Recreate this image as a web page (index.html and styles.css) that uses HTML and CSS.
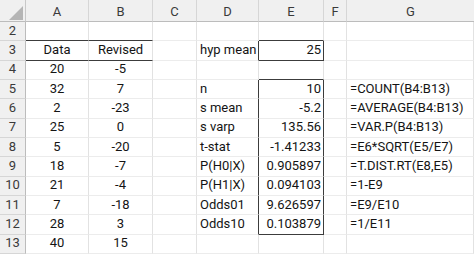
FILE: index.html
```html
<!DOCTYPE html>
<html>
<head>
<meta charset="utf-8">
<link rel="stylesheet" href="styles.css">
</head>
<body>
<div class="sheet">
  <div class="corner"><svg class="tri" width="14" height="14" viewBox="0 0 14 14"><polygon points="14,0 14,14 0,14" fill="#b5b5b5"/></svg></div>
  <div class="ch">A</div><div class="ch">B</div><div class="ch">C</div><div class="ch">D</div><div class="ch">E</div><div class="ch">F</div><div class="ch last">G</div>

  <div class="rh">2</div>
  <div class="c bb"></div><div class="c bb"></div><div class="c"></div><div class="c"></div><div class="c bb"></div><div class="c"></div><div class="c"></div>

  <div class="rh">3</div>
  <div class="c ctr bb">Data</div><div class="c ctr bb">Revised</div><div class="c"></div><div class="c lt br">hyp mean</div><div class="c rt br bb">25</div><div class="c"></div><div class="c"></div>

  <div class="rh">4</div>
  <div class="c ctr">20</div><div class="c ctr">-5</div><div class="c"></div><div class="c"></div><div class="c bb"></div><div class="c"></div><div class="c"></div>

  <div class="rh">5</div>
  <div class="c ctr">32</div><div class="c ctr">7</div><div class="c"></div><div class="c lt br">n</div><div class="c rt br">10</div><div class="c"></div><div class="c lt">=COUNT(B4:B13)</div>

  <div class="rh">6</div>
  <div class="c ctr">2</div><div class="c ctr">-23</div><div class="c"></div><div class="c lt br">s mean</div><div class="c rt br">-5.2</div><div class="c"></div><div class="c lt">=AVERAGE(B4:B13)</div>

  <div class="rh">7</div>
  <div class="c ctr">25</div><div class="c ctr">0</div><div class="c"></div><div class="c lt br">s varp</div><div class="c rt br">135.56</div><div class="c"></div><div class="c lt">=VAR.P(B4:B13)</div>

  <div class="rh">8</div>
  <div class="c ctr">5</div><div class="c ctr">-20</div><div class="c"></div><div class="c lt br">t-stat</div><div class="c rt br">-1.41233</div><div class="c"></div><div class="c lt">=E6*SQRT(E5/E7)</div>

  <div class="rh">9</div>
  <div class="c ctr">18</div><div class="c ctr">-7</div><div class="c"></div><div class="c lt br">P(H0|X)</div><div class="c rt br">0.905897</div><div class="c"></div><div class="c lt">=T.DIST.RT(E8,E5)</div>

  <div class="rh">10</div>
  <div class="c ctr">21</div><div class="c ctr">-4</div><div class="c"></div><div class="c lt br">P(H1|X)</div><div class="c rt br">0.094103</div><div class="c"></div><div class="c lt">=1-E9</div>

  <div class="rh">11</div>
  <div class="c ctr">7</div><div class="c ctr">-18</div><div class="c"></div><div class="c lt br">Odds01</div><div class="c rt br">9.626597</div><div class="c"></div><div class="c lt">=E9/E10</div>

  <div class="rh">12</div>
  <div class="c ctr">28</div><div class="c ctr">3</div><div class="c"></div><div class="c lt br">Odds10</div><div class="c rt br bb">0.103879</div><div class="c"></div><div class="c lt">=1/E11</div>

  <div class="rh">13</div>
  <div class="c ctr">40</div><div class="c ctr">15</div><div class="c"></div><div class="c"></div><div class="c"></div><div class="c"></div><div class="c"></div>
</div>
</body>
</html>
```

FILE: styles.css
```css
html, body {
  margin: 0;
  padding: 0;
  background: #ffffff;
  overflow: hidden;
}

.sheet {
  display: grid;
  grid-template-columns: 26px 63px 64px 44px 62px 65px 23px 1fr;
  grid-template-rows: 22px repeat(12, 19.333px);
  width: 474px;
  font-family: Roboto, "Liberation Sans", sans-serif;
  font-size: 13px;
  color: #141414;
}

.sheet > div {
  box-sizing: border-box;
  display: flex;
  align-items: flex-end;
  padding-bottom: 1.5px;
  line-height: 16px;
  white-space: nowrap;
  overflow: hidden;
}

.corner {
  background: #f0f0f0;
  border-right: 1px solid #c8c8c8;
  border-bottom: 1px solid #bcbcbc;
  justify-content: flex-end;
  padding: 0 2px 2px 0;
}

.tri {
  display: block;
}

.ch {
  background: #f0f0f0;
  border-right: 1px solid #d6d6d6;
  border-bottom: 1px solid #bcbcbc;
  justify-content: center;
  color: #3a3a3a;
}

.ch.last {
  border-right: none;
}

.rh {
  background: #f0f0f0;
  border-right: 1px solid #bcbcbc;
  border-bottom: 1px solid #d6d6d6;
  justify-content: center;
  color: #3a3a3a;
}

.c {
  border-right: 1px solid #e2e2e2;
  border-bottom: 1px solid #ececec;
}

.ctr { justify-content: center; }
.lt { justify-content: flex-start; padding-left: 3px; }
.rt { justify-content: flex-end; padding-right: 2px; }

.c.bb { border-bottom-color: #3c3c3c; }
.c.br { border-right-color: #3c3c3c; }
```
